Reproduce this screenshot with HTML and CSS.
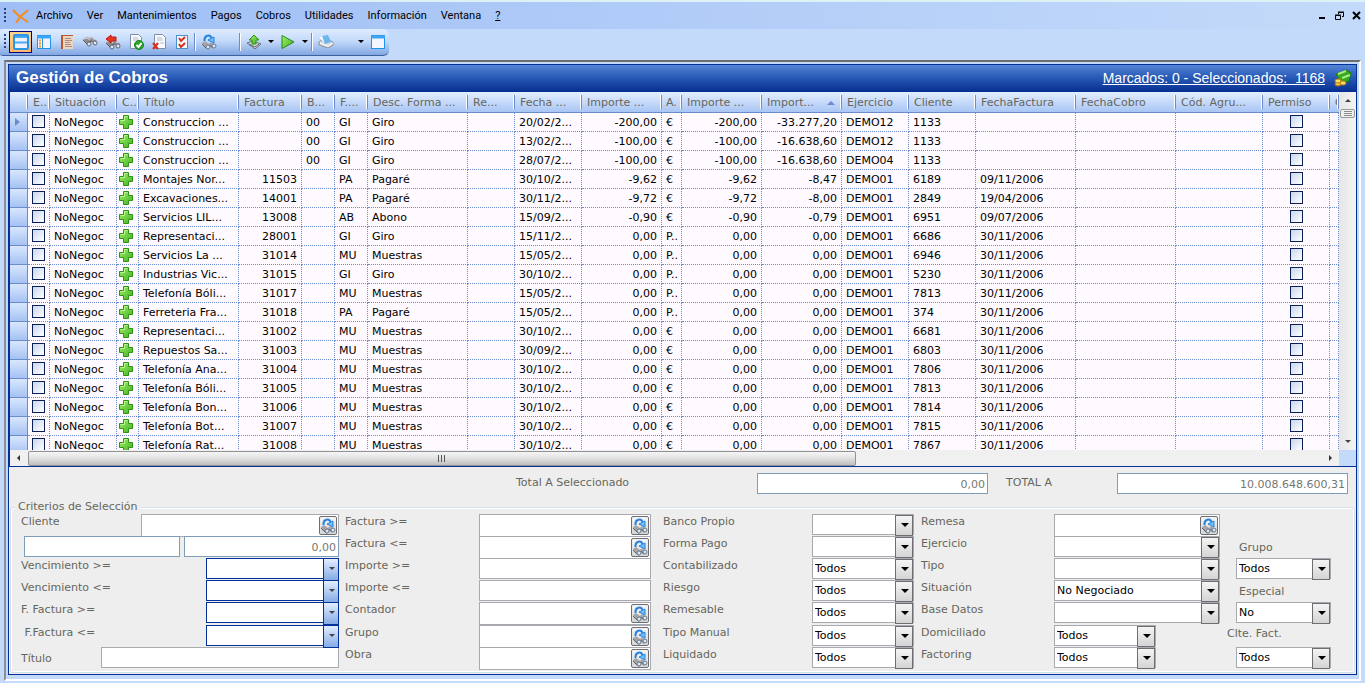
FILE: index.html
```html
<!DOCTYPE html>
<html lang="es">
<head>
    <meta charset="UTF-8">
    <meta name="viewport" content="width=device-width, initial-scale=1.0">
    <title>Gestión de Cobros</title>
    <link rel="stylesheet" href="styles.css">
</head>
<body>
    <!-- iconos compartidos -->
    <svg class="defs" aria-hidden="true">
        <defs>
            <linearGradient id="green" x1="0" y1="0" x2="1" y2="1">
                <stop offset="0" stop-color="#a4f070"/>
                <stop offset="1" stop-color="#3fae1e"/>
            </linearGradient>
            <symbol id="i-plus" viewBox="0 0 14 14">
                <path d="M4.5.5h5v4h4v5h-4v4h-5v-4h-4v-5h4z" fill="url(#green)" stroke="#2c9412"/>
                <path d="M5.5 1.5v4h-4M5.5 1.5h3" fill="none" stroke="#b9f58e"/>
            </symbol>
            <symbol id="i-bino" viewBox="0 0 16 16">
                <path d="M1 5l4-2 5 4-4 4zM6 4l4-1 5 4-3 3z" fill="#8b8b90"/>
                <path d="M2 5l3-1 3 2M7 4l3 0 3 2" fill="none" stroke="#d5d7dc"/>
                <path d="M1 6l5 5M10 7l-3 1" fill="none" stroke="#5a5a5e"/>
                <circle cx="7" cy="10" r="2" fill="#dceaf8" stroke="#66666a"/>
                <circle cx="13" cy="9" r="2" fill="#dceaf8" stroke="#66666a"/>
            </symbol>
            <symbol id="i-search" viewBox="0 0 16 16">
                <path d="M1 9l3-2 4 3 2-2 4 3-2 4-3-2-2 3-5-4z" fill="#a6a6aa"/>
                <path d="M1 10l5 5M9 11l3 3" stroke="#66666a" fill="none"/>
                <circle cx="7" cy="13" r="2" fill="#d4ebfd" stroke="#6c7888"/>
                <circle cx="13" cy="12" r="2" fill="#d4ebfd" stroke="#6c7888"/>
                <path d="M3.500 7C3 1 9 0 10.500 4" fill="none" stroke="#2484e0" stroke-width="2"/>
                <path d="M7 6l6-3v6z" fill="#6cc2fc" stroke="#2a84dc"/>
            </symbol>
        </defs>
    </svg>

    <nav class="menubar">
        <i class="grip"></i>
        <svg class="logo" width="18" height="14" viewBox="0 0 18 14"><path d="M1 1l6 6 9 6M16 1L9 7 4 14" fill="none" stroke="#f98a1c" stroke-width="2"/></svg>
        <a href="#">Archivo</a>
        <a href="#">Ver</a>
        <a href="#">Mantenimientos</a>
        <a href="#">Pagos</a>
        <a href="#">Cobros</a>
        <a href="#">Utilidades</a>
        <a href="#">Información</a>
        <a href="#">Ventana</a>
        <a href="#"><u>?</u></a>
        <div class="win-buttons">
            <button aria-label="Minimizar"><svg width="9" height="9"><path d="M1 7h6" stroke="#000" stroke-width="2"/></svg></button>
            <button aria-label="Restaurar"><svg width="9" height="9"><path d="M3.5 3V1.5h5v4H7M3 1h6M.5 4.5h5v4h-5zM0 4h6" fill="none" stroke="#000"/></svg></button>
            <button aria-label="Cerrar"><svg width="9" height="9"><path d="M1 1l7 7M8 1L1 8" stroke="#000" stroke-width="2"/></svg></button>
        </div>
    </nav>

    <div class="toolbar">
        <i class="grip"></i>
        <button class="active" aria-label="Vista dividida"><svg width="16" height="16"><rect x="1" y="1" width="14" height="14" rx="1" fill="#f0f2fa" stroke="#2a96ea" stroke-width="2"/><path d="M2 3h12M2 8.500h12" stroke="#4aa9ee" stroke-width="2"/></svg></button>
        <button aria-label="Vista lateral"><svg width="16" height="16"><rect x="1.500" y="1.500" width="13" height="13" fill="#f1f3fb" stroke="#1d93ef"/><path d="M1 3h14" stroke="#3ca6f4" stroke-width="3"/><path d="M6.500 4v10" stroke="#1d93ef"/><path d="M3 6.500h2M3 9.500h2M3 12.500h2" stroke="#f49c1c" stroke-width="2"/></svg></button>
        <button aria-label="Ficha"><svg width="16" height="16"><path d="M2 1h12v14H2z" fill="#ebd6c6"/><path d="M3 1v14" stroke="#c0562c" stroke-width="2"/><path d="M2 1.500h12" stroke="#c0562c"/><path d="M6 4.500h6M6 6.500h7M6 8.500h5M6 10.500h6M6 12.500h7" stroke="#a88d82"/></svg></button>
        <button aria-label="Buscar"><svg width="16" height="16"><use href="#i-bino"/></svg></button>
        <button aria-label="Buscar anterior"><svg width="16" height="16"><use href="#i-bino" y="3"/><path d="M1 5l5-4v2h5v4H6v2z" fill="#e8341c" stroke="#b71f10"/></svg></button>
        <button aria-label="Aceptar"><svg width="16" height="16"><path d="M2.500.5h8l3 3v11h-11z" fill="#f7f9fd" stroke="#8090ac"/><path d="M5 4h5M5 6h6" stroke="#b2bccd"/><circle cx="11" cy="11" r="4.500" fill="#2da52d" stroke="#158015"/><path d="M8.500 11l2 2 3-4" fill="none" stroke="#fff" stroke-width="2"/></svg></button>
        <button aria-label="Eliminar"><svg width="16" height="16"><path d="M3.500.5h8l3 3v11h-11z" fill="#f7f9fd" stroke="#8090ac"/><path d="M6 4h5M6 6h6M9 9h4" stroke="#b2bccd"/><path d="M2 9l5 6M7 9l-5 6" stroke="#d92c1a" stroke-width="2"/></svg></button>
        <button aria-label="Marcar"><svg width="16" height="16"><rect x="2.500" y="1.500" width="11" height="13" fill="#f4f7fd" stroke="#4a90ca"/><path d="M5 4l2 3 4-4M5 10l2 3 4-4" fill="none" stroke="#d8301c" stroke-width="2"/></svg></button>
        <i class="sep"></i>
        <button aria-label="Consultar"><svg width="16" height="16"><use href="#i-search"/></svg></button>
        <i class="sep wide"></i>
        <button aria-label="Exportar"><svg width="16" height="16"><path d="M1 9l6-2 8 3-6 5z" fill="#d8dce2" stroke="#697078"/><path d="M3 10l6 3 4-3" fill="none" stroke="#555b63"/><path d="M8 1l5 5h-3v4H6V6H3z" fill="url(#green)" stroke="#2c9412"/></svg></button>
        <i class="drop"></i>
        <button aria-label="Ejecutar"><svg width="16" height="16"><path d="M2 1.500L14 8 2 14.500z" fill="url(#green)" stroke="#218c16"/></svg></button>
        <i class="drop"></i>
        <i class="sep"></i>
        <button aria-label="Imprimir"><svg width="16" height="16"><path d="M1 8l5-4 9 4v3l-5 3-9-3z" fill="#d4d8df" stroke="#8b929d"/><path d="M4 2l6-1 3 7-6 2z" fill="#68b7ef"/><path d="M4 2l-2 2 4 4" fill="#fff"/><path d="M2 9l8 3 5-3" fill="none" stroke="#fff"/></svg></button>
        <i class="drop far"></i>
        <button aria-label="Ventana"><svg width="16" height="16"><rect x="1.500" y="1.500" width="13" height="13" fill="#f4f5fd" stroke="#1d93ef"/><path d="M1 3h14" stroke="#3ca6f4" stroke-width="3"/></svg></button>
    </div>

    <main class="window">
        <header class="title">
            <h1>Gestión de Cobros</h1>
            <a href="#">Marcados: 0 - Seleccionados:&nbsp; 1168</a>
            <svg width="18" height="18" viewBox="0 0 18 18"><path d="M2 5l10-4 5 3-2 8-8 2z" fill="#35a91d" stroke="#1b7a12"/><path d="M4 5l8-3M8 9l8-3" stroke="#a8eb85" stroke-width="2"/><ellipse cx="4" cy="15" rx="3" ry="2" fill="#f2c037" stroke="#a9700c"/><ellipse cx="4" cy="12" rx="3" ry="2" fill="#ffdc62" stroke="#b98212"/><ellipse cx="9" cy="14" rx="3" ry="2" fill="#ffdc62" stroke="#b98212"/></svg>
        </header>

        <div class="grid-area">
            <div class="grid-view">
                <table>
                    <colgroup id="cols"></colgroup>
                    <thead><tr id="head"></tr></thead>
                    <tbody id="rows"></tbody>
                </table>
            </div>
            <div class="vscroll">
                <i class="arrow up"></i>
                <i class="vthumb"></i>
                <i class="arrow down"></i>
            </div>
            <div class="hscroll">
                <i class="arrow left"></i>
                <div class="track"><i class="hthumb"></i></div>
                <i class="arrow right"></i>
            </div>
            <div class="corner"></div>
        </div>

        <div class="totals">
            <label for="tsel">Total A Seleccionado</label>
            <input id="tsel" class="num" value="0,00" readonly>
            <label for="tot" class="short">TOTAL A</label>
            <input id="tot" class="num" value="10.008.648.600,31" readonly>
        </div>

        <fieldset>
            <legend>Criterios de Selección</legend>
            <div class="criteria">
                <div class="group g1">
                    <div class="row"><label for="cli">Cliente</label><span class="lookup"><input id="cli"><button aria-label="Buscar cliente"><svg width="16" height="16"><use href="#i-search"/></svg></button></span></div>
                    <div class="row pair"><input class="num" aria-label="Nombre"><input class="num" aria-label="Saldo" value="0,00"></div>
                    <div class="row"><label for="v1">Vencimiento &gt;=</label><span class="combo date"><select id="v1"><option></option></select></span></div>
                    <div class="row"><label for="v2">Vencimiento &lt;=</label><span class="combo date"><select id="v2"><option></option></select></span></div>
                    <div class="row"><label for="f1">F. Factura &gt;=</label><span class="combo date"><select id="f1"><option></option></select></span></div>
                    <div class="row"><label for="f2">&nbsp;F.Factura &lt;=</label><span class="combo date"><select id="f2"><option></option></select></span></div>
                    <div class="row last"><label for="tit">Título</label><input id="tit" class="text"></div>
                </div>
                <div class="group g2">
                    <div class="row"><label for="fa1">Factura &gt;=</label><span class="lookup"><input id="fa1"><button aria-label="Buscar"><svg width="16" height="16"><use href="#i-search"/></svg></button></span></div>
                    <div class="row"><label for="fa2">Factura &lt;=</label><span class="lookup"><input id="fa2"><button aria-label="Buscar"><svg width="16" height="16"><use href="#i-search"/></svg></button></span></div>
                    <div class="row"><label for="im1">Importe &gt;=</label><input id="im1" class="text"></div>
                    <div class="row"><label for="im2">Importe &lt;=</label><input id="im2" class="text"></div>
                    <div class="row"><label for="con">Contador</label><span class="lookup"><input id="con"><button aria-label="Buscar"><svg width="16" height="16"><use href="#i-search"/></svg></button></span></div>
                    <div class="row"><label for="gru">Grupo</label><span class="lookup"><input id="gru"><button aria-label="Buscar"><svg width="16" height="16"><use href="#i-search"/></svg></button></span></div>
                    <div class="row"><label for="obr">Obra</label><span class="lookup"><input id="obr"><button aria-label="Buscar"><svg width="16" height="16"><use href="#i-search"/></svg></button></span></div>
                </div>
                <div class="group g3">
                    <div class="row"><label for="ban">Banco Propio</label><span class="combo"><select id="ban"><option></option></select></span></div>
                    <div class="row"><label for="fpa">Forma Pago</label><span class="combo"><select id="fpa"><option></option></select></span></div>
                    <div class="row"><label for="cnt">Contabilizado</label><span class="combo"><select id="cnt"><option>Todos</option></select></span></div>
                    <div class="row"><label for="rie">Riesgo</label><span class="combo"><select id="rie"><option>Todos</option></select></span></div>
                    <div class="row"><label for="rem">Remesable</label><span class="combo"><select id="rem"><option>Todos</option></select></span></div>
                    <div class="row"><label for="tma">Tipo Manual</label><span class="combo"><select id="tma"><option>Todos</option></select></span></div>
                    <div class="row"><label for="liq">Liquidado</label><span class="combo"><select id="liq"><option>Todos</option></select></span></div>
                </div>
                <div class="group g4">
                    <div class="row"><label for="rms">Remesa</label><span class="lookup"><input id="rms"><button aria-label="Buscar"><svg width="16" height="16"><use href="#i-search"/></svg></button></span></div>
                    <div class="row"><label for="eje">Ejercicio</label><span class="combo"><select id="eje"><option></option></select></span></div>
                    <div class="row"><label for="tip">Tipo</label><span class="combo"><select id="tip"><option></option></select></span></div>
                    <div class="row"><label for="sit">Situación</label><span class="combo"><select id="sit"><option>No Negociado</option></select></span></div>
                    <div class="row"><label for="bas">Base Datos</label><span class="combo"><select id="bas"><option></option></select></span></div>
                    <div class="row narrow"><label for="dom">Domiciliado</label><span class="combo"><select id="dom"><option>Todos</option></select></span></div>
                    <div class="row narrow"><label for="fac">Factoring</label><span class="combo"><select id="fac"><option>Todos</option></select></span></div>
                </div>
                <div class="group g5">
                    <div class="row"></div>
                    <div class="row"><label for="gr2">Grupo</label></div>
                    <div class="row"><span class="combo"><select id="gr2"><option>Todos</option></select></span></div>
                    <div class="row"><label for="esp">Especial</label></div>
                    <div class="row"><span class="combo"><select id="esp"><option>No</option></select></span></div>
                    <div class="row"><label for="clf" class="out">Clte. Fact.</label></div>
                    <div class="row"><span class="combo"><select id="clf"><option>Todos</option></select></span></div>
                </div>
            </div>
        </fieldset>
    </main>

    <script>
        // columnas: [cabecera, ancho, clase]
        const cols = [
            ['', 18, 'sel'], ['E..', 22, 'chk'], ['Situación', 67], ['C..', 22, 'plus'],
            ['Título', 100], ['Factura', 63, 'r'], ['B...', 33], ['F....', 33],
            ['Desc. Forma ...', 100], ['Re...', 47], ['Fecha ...', 67], ['Importe ...', 80, 'r'],
            ['A.', 20, 'cur'], ['Importe ...', 80, 'r'], ['Import...', 80, 'r sorted'], ['Ejercicio', 67],
            ['Cliente', 67], ['FechaFactura', 100], ['FechaCobro', 100], ['Cód. Agru...', 87],
            ['Permiso', 67, 'chk mid'], ['C', 0]
        ];

        // titulo|factura|banco|fp|desc|fecha|importe|moneda|importe2|importe3|ejercicio|cliente|fechaFactura
        const data = [
            'Construccion ...||00|GI|Giro|20/02/2...|-200,00|€|-200,00|-33.277,20|DEMO12|1133|',
            'Construccion ...||00|GI|Giro|13/02/2...|-100,00|€|-100,00|-16.638,60|DEMO12|1133|',
            'Construccion ...||00|GI|Giro|28/07/2...|-100,00|€|-100,00|-16.638,60|DEMO04|1133|',
            'Montajes Nor...|11503||PA|Pagaré|30/10/2...|-9,62|€|-9,62|-8,47|DEMO01|6189|09/11/2006',
            'Excavaciones...|14001||PA|Pagaré|30/11/2...|-9,72|€|-9,72|-8,00|DEMO01|2849|19/04/2006',
            'Servicios LIL...|13008||AB|Abono|15/09/2...|-0,90|€|-0,90|-0,79|DEMO01|6951|09/07/2006',
            'Representaci...|28001||GI|Giro|15/11/2...|0,00|P..|0,00|0,00|DEMO01|6686|30/11/2006',
            'Servicios La ...|31014||MU|Muestras|15/05/2...|0,00|P..|0,00|0,00|DEMO01|6946|30/11/2006',
            'Industrias Vic...|31015||GI|Giro|30/10/2...|0,00|P..|0,00|0,00|DEMO01|5230|30/11/2006',
            'Telefonía Bóli...|31017||MU|Muestras|15/05/2...|0,00|P..|0,00|0,00|DEMO01|7813|30/11/2006',
            'Ferreteria Fra...|31018||PA|Pagaré|15/05/2...|0,00|P..|0,00|0,00|DEMO01|374|30/11/2006',
            'Representaci...|31002||MU|Muestras|30/10/2...|0,00|€|0,00|0,00|DEMO01|6681|30/11/2006',
            'Repuestos Sa...|31003||MU|Muestras|30/09/2...|0,00|€|0,00|0,00|DEMO01|6803|30/11/2006',
            'Telefonía Ana...|31004||MU|Muestras|30/10/2...|0,00|€|0,00|0,00|DEMO01|7806|30/11/2006',
            'Telefonía Bóli...|31005||MU|Muestras|30/10/2...|0,00|€|0,00|0,00|DEMO01|7813|30/11/2006',
            'Telefonía Bon...|31006||MU|Muestras|30/10/2...|0,00|€|0,00|0,00|DEMO01|7814|30/11/2006',
            'Telefonía Bot...|31007||MU|Muestras|30/10/2...|0,00|€|0,00|0,00|DEMO01|7815|30/11/2006',
            'Telefonía Rat...|31008||MU|Muestras|30/10/2...|0,00|€|0,00|0,00|DEMO01|7867|30/11/2006'
        ];

        const box = '<input type="checkbox" aria-label="Marcar">';
        const plus = '<svg width="14" height="14"><use href="#i-plus"/></svg>';

        document.getElementById('cols').innerHTML = cols.map(c => c[1] ? `<col style="width:${c[1]}px">` : '<col>').join('');
        document.getElementById('head').innerHTML = cols.map(c => `<th class="${c[2] || ''}">${c[0]}</th>`).join('');
        document.getElementById('rows').innerHTML = data.map((line, n) => {
            const d = line.split('|');
            const cells = [n ? '' : '<i class="current"></i>', box, 'NoNegoc', plus,
                ...d.slice(0, 5), '', ...d.slice(5), '', '', box, ''];
            return '<tr>' + cells.map((v, i) => `<td class="${cols[i][2] || ''}">${v}</td>`).join('') + '</tr>';
        }).join('');
    </script>
</body>
</html>
```

FILE: styles.css
```css
:root {
    --navy: #003098;
    --line: #6a8ccb;
    --field: #a9a9b0;
    --label: #66665c;
    --sky: #c4dafa;
}

* {
    box-sizing: border-box;
    margin: 0;
    padding: 0;
}

body {
    background: var(--sky);
    font-family: "DejaVu Sans", Verdana, sans-serif;
    font-size: 11px;
    line-height: 14px;
    color: #000;
    min-height: 100vh;
    display: flex;
    flex-direction: column;
    overflow: hidden;
}

input, select, button {
    font: inherit;
}

.defs {
    position: absolute;
    width: 0;
    height: 0;
}

/* menu */
.menubar {
    height: 29px;
    display: flex;
    align-items: center;
    gap: 14px;
    padding: 0 4px;
    background: linear-gradient(90deg, #9ebef5, #c4dafa);
    border-top: 2px solid #dcf2f5;
    font-family: Roboto, "Liberation Sans", sans-serif;
    font-size: 11px;
}

.menubar a {
    color: #000;
    text-decoration: none;
}

.logo {
    margin: 0 -8px 0 -8px;
}

.grip {
    width: 2px;
    height: 15px;
    background: repeating-linear-gradient(#27417e 0 2px, transparent 2px 4px);
}

.win-buttons {
    margin-left: auto;
    display: flex;
    gap: 8px;
}

.win-buttons button {
    width: 9px;
    height: 9px;
    border: 0;
    background: none;
    display: flex;
}

/* barra de herramientas */
.toolbar {
    align-self: flex-start;
    height: 27px;
    display: flex;
    align-items: center;
    padding: 0 0 1px 4px;
    background: linear-gradient(#dfecff, #c4dafa 45%, #82a7e3);
    border-bottom: 1px solid #3b619c;
    border-radius: 3px 6px 6px 3px;
}

.toolbar .grip {
    margin-right: 3px;
}

.toolbar button {
    width: 23px;
    height: 22px;
    border: 1px solid transparent;
    background: none;
    display: flex;
    align-items: center;
    justify-content: center;
}

.toolbar button.active {
    background: linear-gradient(#ffd48c, #ffb668);
    border-color: #000080;
}

.sep {
    width: 2px;
    height: 18px;
    margin: 0 1px;
    background: linear-gradient(90deg, #6a8ccb 50%, #fff 50%);
}

.sep.wide {
    margin-left: 19px;
}

.drop {
    width: 11px;
    display: flex;
    justify-content: center;
}

.drop::before {
    content: "";
    border: 3px solid transparent;
    border-top-color: #000;
    border-bottom: 0;
}

.drop.far {
    margin-left: 18px;
}

/* ventana */
.window {
    flex: 1;
    margin: 4px 4px 2px;
    padding: 2px 2px 4px;
    border: 2px solid #fff;
    border-top-color: #6e6e72;
    border-left-color: #8e8e94;
    display: flex;
    flex-direction: column;
    background: var(--sky);
}

.title {
    height: 28px;
    display: flex;
    align-items: center;
    padding: 0 4px 0 7px;
    background: linear-gradient(#5585d6, #2a5cb8 45%, #0a3192);
    border: 1px solid var(--navy);
    color: #fff;
    font-family: "Liberation Sans", Arial, sans-serif;
}

.title h1 {
    font-size: 17px;
    line-height: 20px;
    flex: 1;
}

.title a {
    color: #fff;
    font-size: 14px;
    line-height: 16px;
    margin-right: 9px;
}

/* rejilla */
.grid-area {
    display: grid;
    grid-template-columns: minmax(0, 1fr) 17px;
    grid-template-rows: minmax(0, 1fr) 16px;
    flex: 1;
    min-height: 100px;
    border: 1px solid var(--navy);
    border-width: 0 1px 1px 2px;
}

.grid-view {
    overflow: hidden;
    background: #fffaff;
    height: 0;
    min-height: 100%;
}

table {
    width: 100%;
    table-layout: fixed;
    border-collapse: separate;
    border-spacing: 0;
}

th, td {
    overflow: hidden;
    white-space: nowrap;
    text-align: left;
    font-weight: normal;
}

th {
    position: relative;
    height: 21px;
    padding: 2px 0 0 5px;
    color: var(--label);
    background: linear-gradient(#e4efff, #a8c5f5);
    border-bottom: 1px solid var(--line);
}

th::after {
    content: "";
    position: absolute;
    right: 0;
    top: 3px;
    width: 2px;
    height: 14px;
    background: linear-gradient(90deg, #fff 50%, var(--line) 50%);
}

th.cur {
    padding-left: 4px;
}

th.sorted::before {
    content: "";
    position: absolute;
    right: 7px;
    top: 9px;
    border: 4px solid transparent;
    border-bottom-color: var(--line);
    border-top: 0;
}

td {
    height: 19px;
    padding: 2px 4px 0;
    border-right: 1px dotted var(--line);
    border-bottom: 1px dotted var(--line);
}

td.r {
    text-align: right;
}

td.sel {
    padding: 0 5px;
    background: linear-gradient(#d9e7fd, #a5c2f3);
    border-right: 1px solid var(--line);
    border-bottom: 1px solid var(--line);
}

td.cur {
    padding-right: 0;
}

td.plus {
    padding: 0 2px;
}

td.chk {
    padding: 0 4px 1px;
}

td svg, td input {
    display: block;
}

td.mid input {
    margin: 0 auto;
}

.current {
    display: block;
    width: 0;
    border: 4px solid transparent;
    border-left: 5px solid var(--line);
    border-right: 0;
}

input[type="checkbox"] {
    appearance: none;
    width: 13px;
    height: 13px;
    border: 1px solid #0a1f55;
    background: linear-gradient(135deg, #c9d6ee, #fff);
}

/* barras de desplazamiento */
.vscroll {
    display: flex;
    flex-direction: column;
    align-items: center;
    background: linear-gradient(90deg, #e6e6e6, #f4f4f4);
}

.vthumb {
    width: 15px;
    height: 9px;
    border: 1px solid #999;
    border-radius: 2px;
    background: repeating-linear-gradient(#f4f4f4 0 1px, #888 1px 2px) center / 8px 7px no-repeat #eee;
    margin-bottom: auto;
}

.hscroll {
    display: flex;
    align-items: center;
    background: #f0f0f0;
}

.track {
    flex: 1;
    display: flex;
    padding-left: 1px;
}

.hthumb {
    width: 64%;
    height: 15px;
    border: 1px solid #929296;
    border-radius: 2px;
    background: repeating-linear-gradient(90deg, #555 0 1px, transparent 1px 3px) center / 8px 7px no-repeat, linear-gradient(#f5f5f5, #e4e4e4 45%, #bebec0);
}

.arrow {
    width: 17px;
    height: 17px;
    display: flex;
    align-items: center;
    justify-content: center;
}

.arrow::before {
    content: "";
    border: 3px solid transparent;
}

.up::before {
    border-bottom-color: #444;
    border-top: 0;
}

.down::before {
    border-top-color: #444;
    border-bottom: 0;
}

.left::before {
    border-right-color: #333;
    border-left: 0;
}

.right::before {
    border-left-color: #333;
    border-right: 0;
}

.corner {
    background: var(--sky);
}

/* totales */
.totals {
    display: flex;
    justify-content: flex-end;
    padding: 6px 8px 13px 0;
    background: #eee;
    border: solid var(--navy);
    border-width: 0 1px;
}

label, legend {
    color: var(--label);
    white-space: nowrap;
}

.totals label {
    width: 241px;
    padding-top: 3px;
}

.totals label.short {
    width: 129px;
    padding-left: 18px;
}

.totals input {
    width: 231px;
}

.num, .text {
    height: 21px;
    padding: 2px 2px 0;
    background: #fff;
    border: 1px solid #7f9db9;
    color: #77776f;
}

.num {
    text-align: right;
}

.text {
    border-color: var(--field);
    color: #000;
}

/* criterios */
fieldset {
    border: solid var(--navy);
    border-width: 0 1px 1px;
    min-width: 0;
    position: relative;
    background: #eee;
}

fieldset::before {
    content: "";
    position: absolute;
    inset: 0 1px 1px;
    border: 1px solid #d3dfe8;
    border-radius: 3px;
    box-shadow: inset 0 0 0 1px #fff;
}

legend {
    position: absolute;
    left: 6px;
    top: -7px;
    padding: 0 3px;
    background: #eee;
    z-index: 1;
}

.criteria {
    position: relative;
    display: grid;
    grid-template-columns: 324fr 318fr 258fr 306fr 104fr;
    padding: 7px 25px 5px 12px;
}

.group {
    display: grid;
    grid-template-rows: repeat(4, 22px) 23px 22px 22px;
    min-width: 0;
}

.row {
    display: flex;
    justify-content: space-between;
    align-items: flex-start;
}

.row label {
    padding-top: 1px;
}

.g1 { padding-right: 6px; }
.g2 { padding-right: 12px; }
.g3 { padding-right: 7px; }
.g4 { padding-right: 7px; }

.g1 .lookup { width: 198px; }
.g1 .date { width: 133px; }
.g1 .text { width: 238px; }
.g2 .lookup, .g2 .text { width: 172px; }
.g3 .combo { width: 102px; }
.g4 .lookup, .g4 .combo { width: 166px; }

.g4 .narrow .combo {
    width: 102px;
    margin-right: 64px;
}

.g5 .row {
    padding-left: 9px;
}

.g5 label {
    padding: 5px 0 0 3px;
}

.g5 .combo {
    width: 100%;
}

.g5 label.out {
    margin-left: -12px;
    padding-top: 2px;
}

.row.pair {
    gap: 4px;
    padding-left: 3px;
}

.pair input {
    flex: 1;
    min-width: 0;
}

.last label {
    padding-top: 5px;
}

.lookup {
    display: flex;
    height: 23px;
    padding: 1px;
    background: #fff;
    border: 1px solid var(--field);
}

.lookup input {
    flex: 1;
    min-width: 0;
    border: 0;
    background: none;
}

.lookup button {
    width: 18px;
    height: 19px;
    border: 1px solid #6e6e72;
    border-radius: 2px;
    background: linear-gradient(#f4f4f4, #d8d8d8);
    display: flex;
    align-items: center;
    justify-content: center;
}

.combo {
    position: relative;
    display: block;
    height: 21px;
}

.combo select {
    appearance: none;
    width: 100%;
    height: 21px;
    padding: 0 18px 0 2px;
    border: 1px solid var(--field);
    border-radius: 0;
    background: #fff;
    color: #000;
}

/* boton desplegable */
.combo::before {
    content: "";
    position: absolute;
    right: 1px;
    top: 1px;
    width: 16px;
    height: 19px;
    border: 1px solid #6e6e72;
    background: linear-gradient(#f4f4f4, #d4d4d4);
    pointer-events: none;
}

.combo::after {
    content: "";
    position: absolute;
    right: 5px;
    top: 9px;
    border: 4px solid transparent;
    border-top-color: #000;
    border-bottom: 0;
    pointer-events: none;
}

.date select {
    border-color: var(--navy);
}

.date::before {
    width: 14px;
    right: 0;
    top: 0;
    height: 21px;
    border-color: var(--navy);
    background: linear-gradient(#e2eeff, #85abe6);
}

.date::after {
    right: 4px;
    border-width: 3px 3px 0;
    border-top-color: #444;
}
```
